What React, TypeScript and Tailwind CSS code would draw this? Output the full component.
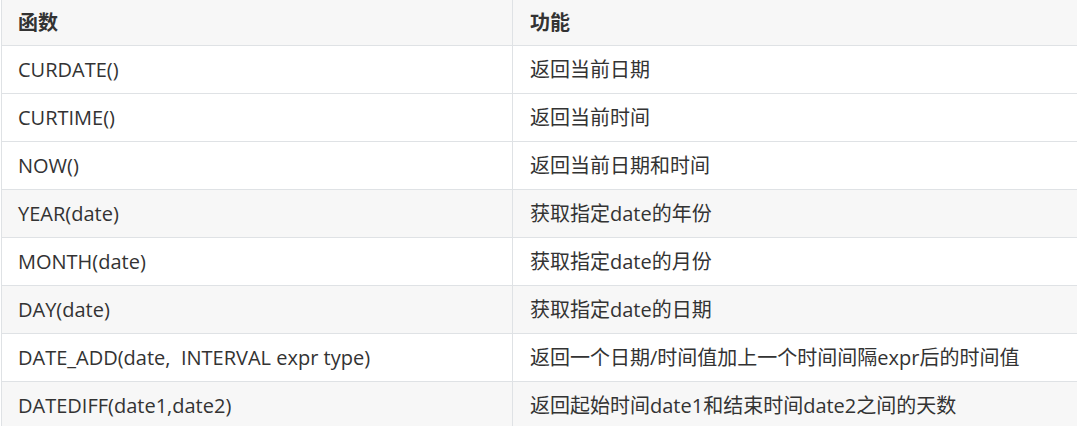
import React from "react";

const rows: [string, string, boolean][] = [
  ["CURDATE()", "返回当前日期", false],
  ["CURTIME()", "返回当前时间", false],
  ["NOW()", "返回当前日期和时间", false],
  ["YEAR(date)", "获取指定date的年份", true],
  ["MONTH(date)", "获取指定date的月份", false],
  ["DAY(date)", "获取指定date的日期", true],
  ["DATE_ADD(date,\u00a0 INTERVAL expr type)", "返回一个日期/时间值加上一个时间间隔expr后的时间值", false],
  ["DATEDIFF(date1,date2)", "返回起始时间date1和结束时间date2之间的天数", true],
];

export default function App() {
  return (
    <div
      className="w-[1077px] h-[426px] overflow-hidden bg-white pl-px text-[20px] text-[#333]"
      style={{ fontFamily: '"Open Sans", "Noto Sans CJK SC", sans-serif' }}
    >
      <div className="w-[1200px] border-l border-[#dfe2e5]">
        <div className="grid grid-cols-[511px_1fr] h-[46px] bg-[#f7f7f7] border-b border-[#dfe2e5] font-bold">
          <div className="flex items-center pl-[16px] border-r border-[#dfe2e5]">函数</div>
          <div className="flex items-center pl-[17px]">功能</div>
        </div>
        {rows.map(([a, b, gray], i) => (
          <div
            key={i}
            className={`grid grid-cols-[511px_1fr] h-[48px] border-b border-[#dfe2e5] ${gray ? "bg-[#f7f7f7]" : "bg-white"}`}
          >
            <div className="flex items-center pl-[16px] border-r border-[#dfe2e5]">{a}</div>
            <div className="flex items-center pl-[17px]">{b}</div>
          </div>
        ))}
      </div>
    </div>
  );
}
